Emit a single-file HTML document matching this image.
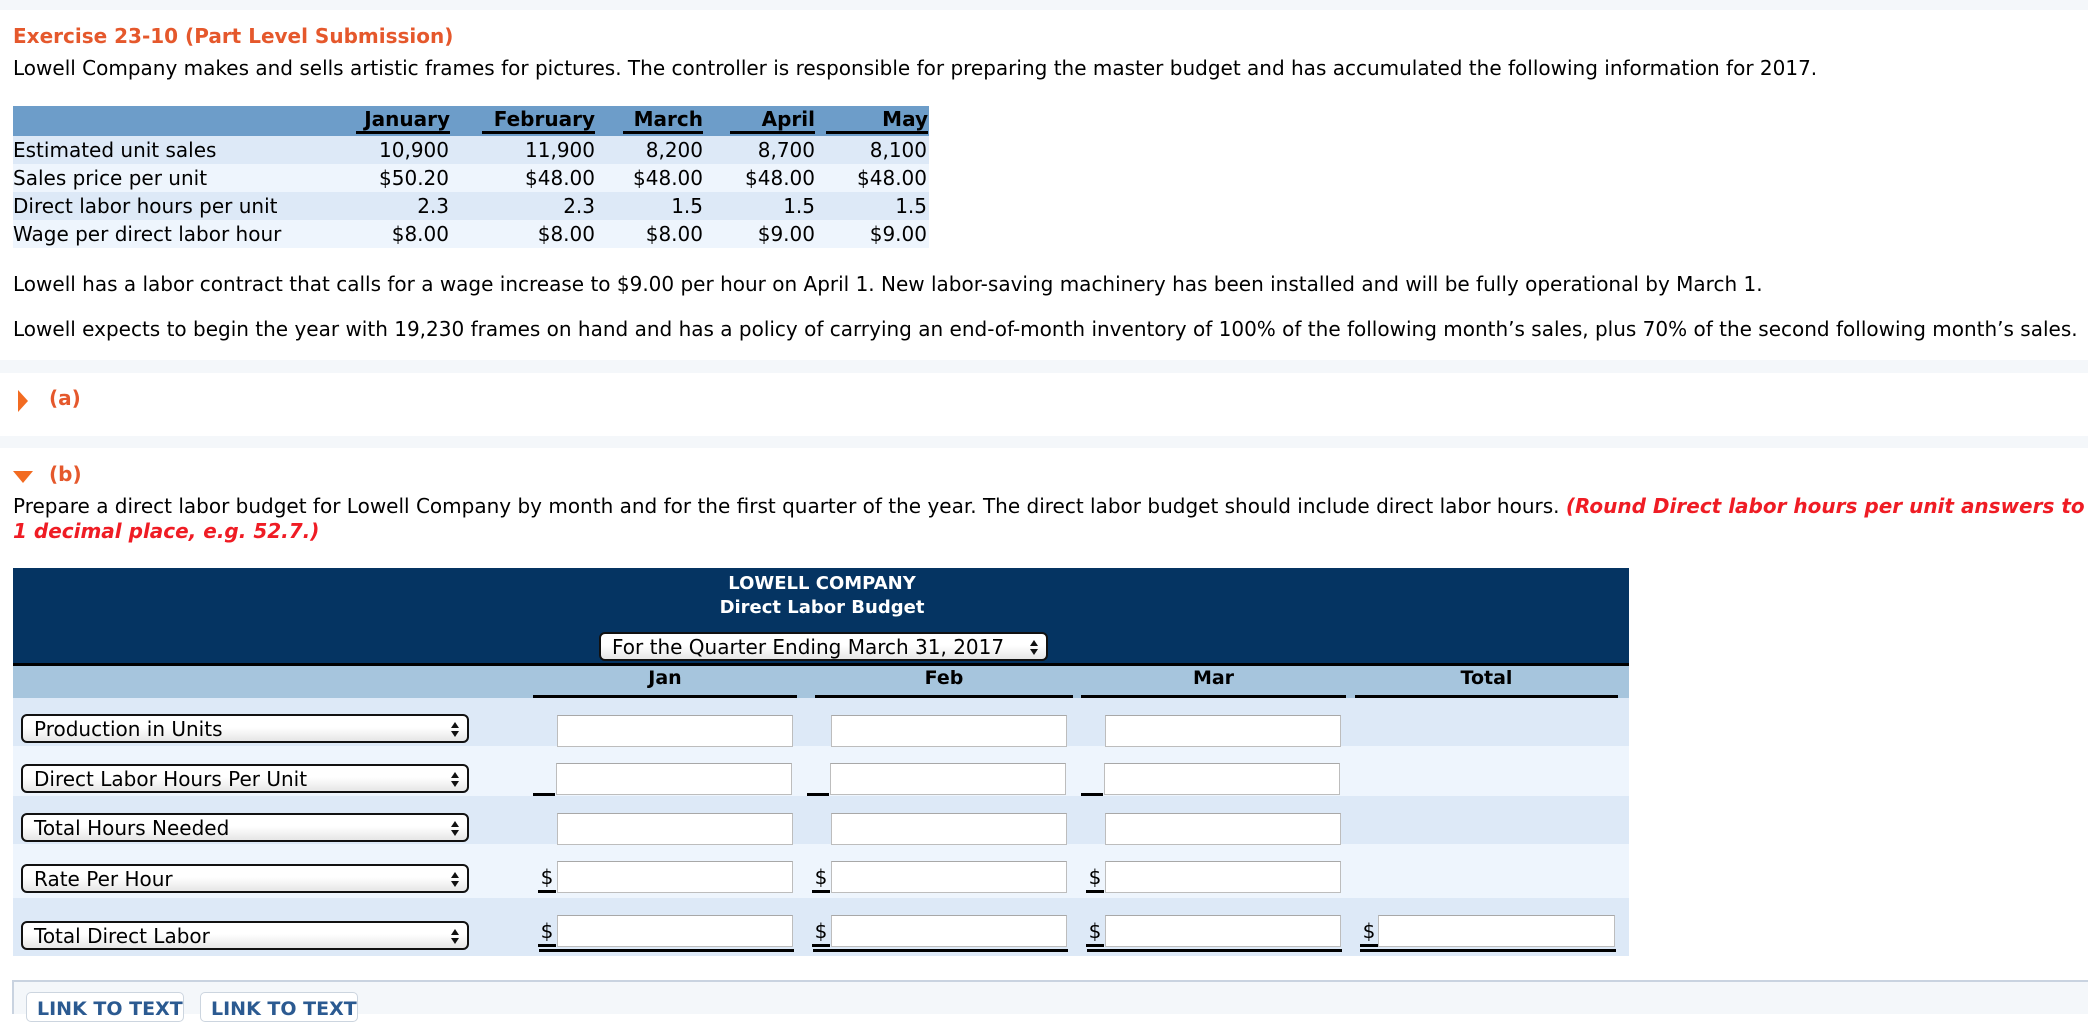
<!DOCTYPE html>
<html><head><meta charset="utf-8">
<style>
*{box-sizing:border-box;margin:0;padding:0}
html,body{width:2088px;height:1014px;overflow:hidden;background:#fff;font-family:"DejaVu Sans","Liberation Sans",sans-serif;color:#000}
.a{position:absolute;white-space:nowrap}
.t{font-size:20px}
.strip{position:absolute;left:0;width:2088px;background:#f4f7fa}
.dt{position:absolute;left:13px;width:916px;font-size:20px}
.dt .r{position:absolute;left:0;width:916px;height:28px}
.dt span{position:absolute;top:2px}
.num{text-align:right}
.sel{position:absolute;left:21px;width:448px;height:29px;border:2px solid #111;border-radius:6px;background:linear-gradient(#fff,#fff 45%,#e6e6e6);font-size:20px;padding:1px 0 0 11px;white-space:nowrap}
.sel:after{content:"";position:absolute;right:8px;top:6px;width:0;height:0;border-left:4px solid transparent;border-right:4px solid transparent;border-bottom:6px solid #111}
.sel:before{content:"";position:absolute;right:8px;top:15px;width:0;height:0;border-left:4px solid transparent;border-right:4px solid transparent;border-top:6px solid #111}
.in{position:absolute;width:236px;height:32px;background:#fff;border:1px solid #bdbdbd;border-top-color:#a8a8a8}
.ul{position:absolute;height:3px;background:#000}
.dol{position:absolute;font-size:20px;line-height:26px;border-bottom:3px solid #000;width:18px;text-align:center}
.btn{position:absolute;top:992px;height:30px;border:1px solid #ccd5df;border-radius:5px;background:#fff;color:#2b5a91;font-weight:bold;font-size:19px;padding:5px 0 0 10px;white-space:nowrap}
</style></head><body>
<div class="strip" style="top:0;height:10px"></div>

<div class="a" style="left:13px;top:24px;font-size:20px;font-weight:bold;color:#e5582c">Exercise 23-10 (Part Level Submission)</div>
<div class="a t" style="left:13px;top:56px">Lowell Company makes and sells artistic frames for pictures. The controller is responsible for preparing the master budget and has accumulated the following information for 2017.</div>

<div class="dt" style="top:106px">
 <div class="r" style="top:0;height:30px;background:#6d9dc9;font-weight:bold">
  <span style="left:343px;width:94px;top:1px;border-bottom:3px solid #000;text-align:right">January</span>
  <span style="left:469px;width:113px;top:1px;border-bottom:3px solid #000;text-align:right">February</span>
  <span style="left:610px;width:80px;top:1px;border-bottom:3px solid #000;text-align:right">March</span>
  <span style="left:717px;width:85px;top:1px;border-bottom:3px solid #000;text-align:right">April</span>
  <span style="left:813px;width:102px;top:1px;border-bottom:3px solid #000;text-align:right">May</span>
 </div>
 <div class="r" style="top:30px;background:#dde9f7"><span style="left:0">Estimated unit sales</span><span class="num" style="right:480px">10,900</span><span class="num" style="right:334px">11,900</span><span class="num" style="right:226px">8,200</span><span class="num" style="right:114px">8,700</span><span class="num" style="right:2px">8,100</span></div>
 <div class="r" style="top:58px;background:#eef5fd"><span style="left:0">Sales price per unit</span><span class="num" style="right:480px">$50.20</span><span class="num" style="right:334px">$48.00</span><span class="num" style="right:226px">$48.00</span><span class="num" style="right:114px">$48.00</span><span class="num" style="right:2px">$48.00</span></div>
 <div class="r" style="top:86px;background:#dde9f7"><span style="left:0">Direct labor hours per unit</span><span class="num" style="right:480px">2.3</span><span class="num" style="right:334px">2.3</span><span class="num" style="right:226px">1.5</span><span class="num" style="right:114px">1.5</span><span class="num" style="right:2px">1.5</span></div>
 <div class="r" style="top:114px;background:#eef5fd"><span style="left:0">Wage per direct labor hour</span><span class="num" style="right:480px">$8.00</span><span class="num" style="right:334px">$8.00</span><span class="num" style="right:226px">$8.00</span><span class="num" style="right:114px">$9.00</span><span class="num" style="right:2px">$9.00</span></div>
</div>

<div class="a t" style="left:13px;top:272px">Lowell has a labor contract that calls for a wage increase to $9.00 per hour on April 1. New labor-saving machinery has been installed and will be fully operational by March 1.</div>
<div class="a t" style="left:13px;top:317px">Lowell expects to begin the year with 19,230 frames on hand and has a policy of carrying an end-of-month inventory of 100% of the following month’s sales, plus 70% of the second following month’s sales.</div>

<div class="strip" style="top:360px;height:13px"></div>
<div class="a" style="left:18px;top:390px;width:0;height:0;border-top:11px solid transparent;border-bottom:11px solid transparent;border-left:10px solid #f26b21"></div>
<div class="a" style="left:49px;top:386px;font-size:20px;font-weight:bold;color:#e5582c">(a)</div>
<div class="strip" style="top:436px;height:12px"></div>

<div class="a" style="left:13px;top:471px;width:0;height:0;border-left:10px solid transparent;border-right:10px solid transparent;border-top:12px solid #f26b21"></div>
<div class="a" style="left:49px;top:462px;font-size:20px;font-weight:bold;color:#e5582c">(b)</div>
<div class="a t" style="left:13px;top:494px">Prepare a direct labor budget for Lowell Company by month and for the first quarter of the year. The direct labor budget should include direct labor hours. <b style="color:#ef1c24;font-style:italic">(Round Direct labor hours per unit answers to</b></div>
<div class="a t" style="left:13px;top:519px;color:#ef1c24;font-weight:bold;font-style:italic">1 decimal place, e.g. 52.7.)</div>

<div class="a" style="left:13px;top:568px;width:1616px;height:95px;background:#053462"></div>
<div class="a" style="left:13px;top:663px;width:1616px;height:3px;background:#000"></div>
<div class="a" style="left:600px;top:572px;width:444px;text-align:center;color:#fff;font-weight:bold;font-size:18px;line-height:24px">LOWELL COMPANY<br>Direct Labor Budget</div>
<div class="sel" style="left:599px;top:632px;width:449px;height:29px;padding-left:11px">For the Quarter Ending March 31, 2017</div>
<div class="a" style="left:13px;top:666px;width:1616px;height:32px;background:#a6c5dd"></div>
<div class="a" style="left:533px;top:667px;width:264px;text-align:center;font-weight:bold;font-size:19px">Jan</div>
<div class="a" style="left:815px;top:667px;width:258px;text-align:center;font-weight:bold;font-size:19px">Feb</div>
<div class="a" style="left:1081px;top:667px;width:265px;text-align:center;font-weight:bold;font-size:19px">Mar</div>
<div class="a" style="left:1355px;top:667px;width:263px;text-align:center;font-weight:bold;font-size:19px">Total</div>
<div class="ul" style="left:533px;top:695px;width:264px"></div>
<div class="ul" style="left:815px;top:695px;width:258px"></div>
<div class="ul" style="left:1081px;top:695px;width:265px"></div>
<div class="ul" style="left:1355px;top:695px;width:263px"></div>

<div class="a" style="left:13px;top:698px;width:1616px;height:48px;background:#dde9f7"></div>
<div class="a" style="left:13px;top:746px;width:1616px;height:50px;background:#eef5fd"></div>
<div class="a" style="left:13px;top:796px;width:1616px;height:48px;background:#dde9f7"></div>
<div class="a" style="left:13px;top:844px;width:1616px;height:54px;background:#eef5fd"></div>
<div class="a" style="left:13px;top:898px;width:1616px;height:58px;background:#dde9f7"></div>

<div class="sel" style="top:714px">Production in Units</div>
<div class="sel" style="top:764px">Direct Labor Hours Per Unit</div>
<div class="sel" style="top:813px">Total Hours Needed</div>
<div class="sel" style="top:864px">Rate Per Hour</div>
<div class="sel" style="top:921px">Total Direct Labor</div>

<div class="in" style="left:557px;top:715px"></div>
<div class="in" style="left:831px;top:715px"></div>
<div class="in" style="left:1105px;top:715px"></div>

<div class="in" style="left:556px;top:763px"></div>
<div class="in" style="left:830px;top:763px"></div>
<div class="in" style="left:1104px;top:763px"></div>
<div class="ul" style="left:533px;top:793px;width:22px"></div>
<div class="ul" style="left:807px;top:793px;width:22px"></div>
<div class="ul" style="left:1081px;top:793px;width:22px"></div>

<div class="in" style="left:557px;top:813px"></div>
<div class="in" style="left:831px;top:813px"></div>
<div class="in" style="left:1105px;top:813px"></div>

<div class="dol" style="left:538px;top:864px">$</div>
<div class="dol" style="left:812px;top:864px">$</div>
<div class="dol" style="left:1086px;top:864px">$</div>
<div class="in" style="left:557px;top:861px"></div>
<div class="in" style="left:831px;top:861px"></div>
<div class="in" style="left:1105px;top:861px"></div>

<div class="dol" style="left:538px;top:918px">$</div>
<div class="dol" style="left:812px;top:918px">$</div>
<div class="dol" style="left:1086px;top:918px">$</div>
<div class="dol" style="left:1360px;top:918px">$</div>
<div class="in" style="left:557px;top:915px"></div>
<div class="in" style="left:831px;top:915px"></div>
<div class="in" style="left:1105px;top:915px"></div>
<div class="in" style="left:1378px;top:915px;width:237px"></div>
<div class="ul" style="left:539px;top:949px;width:255px"></div>
<div class="ul" style="left:813px;top:949px;width:255px"></div>
<div class="ul" style="left:1087px;top:949px;width:255px"></div>
<div class="ul" style="left:1360px;top:949px;width:256px"></div>

<div class="a" style="left:12px;top:980px;width:2076px;height:34px;background:#f4f7fa;border-top:2px solid #c9d3e0;border-left:2px solid #c9d3e0"></div>
<div class="btn" style="left:26px;width:158px">LINK TO TEXT</div>
<div class="btn" style="left:200px;width:158px">LINK TO TEXT</div>
</body></html>
